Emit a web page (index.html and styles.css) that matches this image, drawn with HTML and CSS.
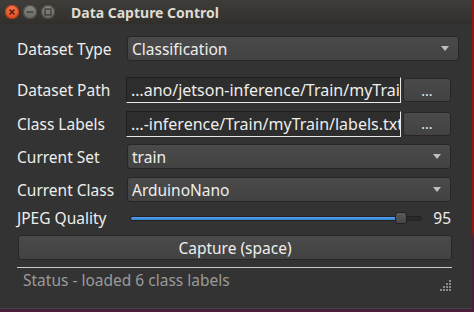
FILE: index.html
```html
<!DOCTYPE html>
<html lang="en">
<head>
    <meta charset="UTF-8">
    <title>Data Capture Control</title>
    <link rel="stylesheet" href="styles.css">
</head>
<body>
    <div class="window">
        <div class="titlebar">
            <div class="win-buttons">
                <span class="win-btn close">
                    <svg width="14" height="14" viewBox="0 0 14 14"><path d="M4.5 4.5 L9.5 9.5 M9.5 4.5 L4.5 9.5" stroke="#4a1a0c" stroke-width="1.3"/></svg>
                </span>
                <span class="win-btn">
                    <svg width="14" height="14" viewBox="0 0 14 14"><path d="M3.5 7 H10.5" stroke="#3a3935" stroke-width="1.3"/></svg>
                </span>
                <span class="win-btn">
                    <svg width="14" height="14" viewBox="0 0 14 14"><rect x="4" y="4" width="6" height="6" fill="none" stroke="#3a3935" stroke-width="1.2"/></svg>
                </span>
            </div>
            <div class="title">Data Capture Control</div>
        </div>

        <div class="content">
            <div class="row row-type">
                <label class="label">Dataset Type</label>
                <div class="combo combo-wide">
                    <span>Classification</span>
                    <span class="arrow"></span>
                </div>
            </div>

            <div class="row row-path">
                <label class="label">Dataset Path</label>
                <div class="line-edit">…ano/jetson-inference/Train/myTrain</div>
                <button class="tool-btn">...</button>
            </div>

            <div class="row">
                <label class="label">Class Labels</label>
                <div class="line-edit">…-inference/Train/myTrain/labels.txt</div>
                <button class="tool-btn">...</button>
            </div>

            <div class="row">
                <label class="label">Current Set</label>
                <div class="combo">
                    <span>train</span>
                    <span class="arrow"></span>
                </div>
            </div>

            <div class="row">
                <label class="label">Current Class</label>
                <div class="combo">
                    <span>ArduinoNano</span>
                    <span class="arrow"></span>
                </div>
            </div>

            <div class="row row-slider">
                <label class="label">JPEG Quality</label>
                <div class="slider">
                    <div class="groove">
                        <div class="fill" style="width: 91%"></div>
                    </div>
                    <div class="handle" style="left: 91%"></div>
                </div>
                <span class="value">95</span>
            </div>

            <button class="capture">Capture (space)</button>

            <div class="separator"></div>

            <div class="status-row">
                <span class="status">Status - loaded 6 class labels</span>
                <svg class="grip" width="12" height="12" viewBox="0 0 12 12" fill="#8a8a8a">
                    <rect x="9" y="0" width="2" height="2"/>
                    <rect x="6" y="3" width="2" height="2"/><rect x="9" y="3" width="2" height="2"/>
                    <rect x="3" y="6" width="2" height="2"/><rect x="6" y="6" width="2" height="2"/><rect x="9" y="6" width="2" height="2"/>
                    <rect x="0" y="9" width="2" height="2"/><rect x="3" y="9" width="2" height="2"/><rect x="6" y="9" width="2" height="2"/><rect x="9" y="9" width="2" height="2"/>
                </svg>
            </div>
        </div>
    </div>
</body>
</html>
```

FILE: styles.css
```css
* {
    margin: 0;
    padding: 0;
    box-sizing: border-box;
}

body {
    width: 474px;
    height: 312px;
    overflow: hidden;
    background: linear-gradient(#8c1a10 0, #8c1a10 230px, #4a1f3a 240px, #4a1f3a 100%);
    font-family: "Noto Sans", "Open Sans", sans-serif;
    font-size: 15.5px;
    color: #eeeeec;
}

.window {
    width: 472px;
    height: 309px;
    background: #333333;
    border-bottom: 1px solid #444;
}

.titlebar {
    height: 24px;
    background: linear-gradient(#3e3d39, #302f2c);
    display: flex;
    align-items: center;
    padding-left: 5px;
}

.win-buttons {
    display: flex;
    gap: 4px;
}

.win-btn {
    width: 14px;
    height: 14px;
    border-radius: 50%;
    background: linear-gradient(#8a8984, #67665f);
    box-shadow: inset 0 0 0 1px #4a4945;
    display: flex;
}

.win-btn.close {
    background: linear-gradient(#f6784d, #df4a1f);
    box-shadow: inset 0 0 0 1px #b03a18;
}

.title {
    margin-left: 16px;
    font-weight: bold;
    font-size: 14px;
    color: #dfdbd2;
}

.content {
    padding: 12px 21px 0 16px;
}

.row {
    display: flex;
    align-items: center;
    height: 25px;
    margin-top: 8px;
}

.row-type {
    margin-top: 0;
    margin-right: -8px;
}

.row-path {
    margin-top: 16px;
    height: 26px;
}

.label {
    width: 111px;
    flex: none;
    padding-left: 1px;
}

.combo {
    flex: 1;
    height: 25px;
    border: 1px solid #262626;
    border-radius: 3px;
    background: linear-gradient(#4a4a4a, #424242);
    display: flex;
    align-items: center;
    justify-content: space-between;
    padding: 0 9px 0 4px;
}

.arrow {
    width: 0;
    height: 0;
    border-left: 4px solid transparent;
    border-right: 4px solid transparent;
    border-top: 5px solid #c0c0c0;
}

.line-edit {
    flex: 1;
    height: 26px;
    background: #2d2d2d;
    border-top: 1px solid #1f1f1f;
    border-left: 1px solid #1f1f1f;
    border-bottom: 1px solid #e8e8e8;
    border-right: 1px solid #e8e8e8;
    padding: 1px 0 0 4px;
    white-space: nowrap;
    overflow: hidden;
    font-size: 16px;
    line-height: 22px;
    margin-left: -1px;
}

.tool-btn {
    width: 48px;
    height: 24px;
    margin-left: 2px;
    border: 1px solid #262626;
    border-radius: 3px;
    background: linear-gradient(#4a4a4a, #424242);
    color: #eeeeec;
    font-family: inherit;
    font-size: 14px;
}

.row-slider {
    height: 16px;
}

.slider {
    position: relative;
    flex: 1;
    height: 16px;
    margin-left: 3px;
    margin-right: 8px;
}

.groove {
    position: absolute;
    left: 0;
    right: 0;
    top: 6px;
    height: 5px;
    border-radius: 3px;
    background: #2a2a2a;
    border: 1px solid #222;
    overflow: hidden;
}

.fill {
    height: 100%;
    background: linear-gradient(#5aa3ec, #2f7fd2);
}

.handle {
    position: absolute;
    top: 2px;
    width: 12px;
    height: 12px;
    margin-left: -1px;
    border-radius: 3px;
    border: 1px solid #222;
    background: linear-gradient(#5a5a5a, #464646);
}

.value {
    width: 21px;
    text-align: right;
}

.capture {
    display: block;
    width: 434px;
    height: 25px;
    margin: 9px 0 0 2px;
    border: 1px solid #262626;
    border-radius: 3px;
    background: linear-gradient(#4a4a4a, #424242);
    color: #eeeeec;
    font-family: inherit;
    font-size: 15.5px;
}

.separator {
    height: 1px;
    margin: 7px 0 0 1px;
    width: 435px;
    background: #c8c8c8;
}

.status-row {
    display: flex;
    justify-content: space-between;
    align-items: flex-end;
    padding: 1px 0 0 7px;
    width: 436px;
    height: 24px;
}

.status {
    color: #9a9a9a;
    align-self: flex-start;
}
```
